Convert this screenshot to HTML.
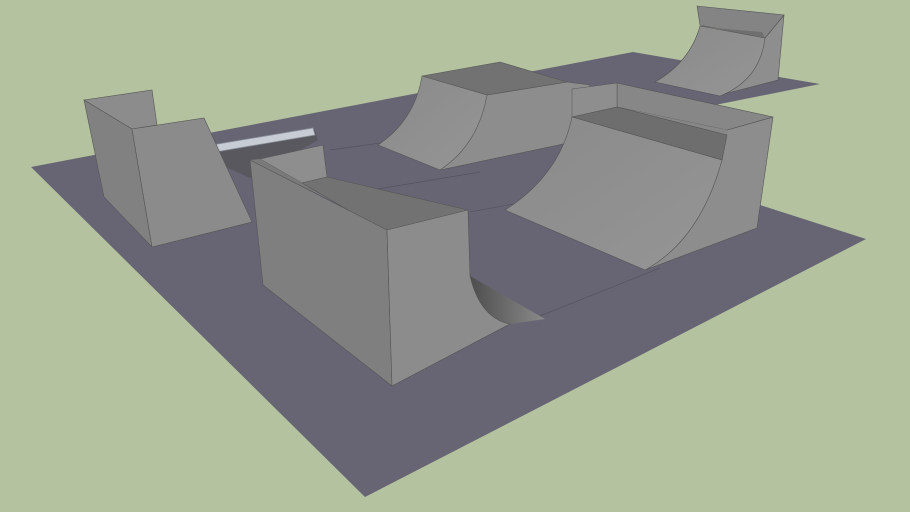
<!DOCTYPE html>
<html><head><style>html,body{margin:0;padding:0;background:#b4c29f;}svg{display:block}</style></head>
<body>
<svg width="910" height="512" viewBox="0 0 910 512" xmlns="http://www.w3.org/2000/svg">
<defs>
<linearGradient id="cv" x1="0" y1="0" x2="1" y2="1"><stop offset="0" stop-color="#8a8a8a"/><stop offset="1" stop-color="#959595"/></linearGradient>
<linearGradient id="pit" x1="0" y1="0" x2="1" y2="0"><stop offset="0" stop-color="#4e4e4e"/><stop offset="1" stop-color="#8a8a8a"/></linearGradient>
</defs>
<rect width="910" height="512" fill="#b4c29f"/>
<polygon points="31,167 633,52 820,84 700,108 760,205 866,239 365,497" fill="#676574"/>
<g stroke="#55535f" stroke-width="0.7" fill="none">
<line x1="330" y1="150" x2="440" y2="135"/>
<line x1="360" y1="192" x2="480" y2="172"/>
<line x1="470" y1="212" x2="600" y2="188"/>
<line x1="530" y1="320" x2="660" y2="268"/>
</g>
<!-- far ramp -->
<polygon points="765,38 784,15 778,80 720,95" fill="#8e8e8e" stroke="#555" stroke-width="0.6"/>
<polygon points="697,6 784,15 765,38 700,25" fill="#848484" stroke="#555" stroke-width="0.6"/>
<polygon points="700,25 765,38 762,32 703,27" fill="#6f6f6f"/>
<path d="M700,26 L765,38 Q760,80 720,96 L655,82 Q690,62 700,26 Z" fill="url(#cv)" stroke="#555" stroke-width="0.6"/>
<!-- left box -->
<polygon points="84,100 152,90 157,125 132,129" fill="#8c8c8c" stroke="#555" stroke-width="0.6"/>
<polygon points="84,100 132,129 152,247 104,197" fill="#818181" stroke="#555" stroke-width="0.6"/>
<polygon points="205,150 315,130 318,140 250,178 210,160" fill="#59585f"/>
<polygon points="212,145 313,128 315,135 215,152" fill="#c8ccd4" stroke="#8a8e98" stroke-width="0.8"/>
<polygon points="132,129 204,118 252,222 152,247" fill="#8b8b8b" stroke="#555" stroke-width="0.6"/>
<!-- middle ramp -->
<polygon points="487,95 567,82 590,85 582,140 440,170" fill="#8d8d8d" stroke="#555" stroke-width="0.6"/>
<polygon points="422,76 500,62 567,82 487,95" fill="#727272" stroke="#555" stroke-width="0.6"/>
<path d="M422,76 L487,95 Q478,145 440,170 L378,145 Q415,120 422,76 Z" fill="url(#cv)" stroke="#555" stroke-width="0.6"/>
<!-- big right ramp -->
<polygon points="722,160 727,130 773,117 757,228 645,270" fill="#8d8d8d" stroke="#555" stroke-width="0.6"/>
<polygon points="617,83 773,117 727,130 617,107" fill="#878787" stroke="#555" stroke-width="0.6"/>
<polygon points="617,107 727,130 727,135" fill="#878787"/>
<polygon points="572,89 617,83 617,107 572,117" fill="#8e8e8e" stroke="#555" stroke-width="0.5"/>
<polygon points="572,117 617,107 727,135 722,160" fill="#6e6e6e" stroke="#555" stroke-width="0.6"/>
<path d="M572,117 L722,160 Q700,240 645,270 L505,210 Q560,175 572,117 Z" fill="url(#cv)" stroke="#555" stroke-width="0.6"/>
<!-- big left halfpipe side -->
<polygon points="260,159 323,145 327,177 302,183" fill="#8e8e8e" stroke="#555" stroke-width="0.6"/>
<polygon points="250,160 260,159 302,183 387,233 386,228" fill="#7a7a7a"/>
<polygon points="302,183 327,177 468,210 387,233" fill="#727272" stroke="#555" stroke-width="0.6"/>
<polygon points="250,160 387,230 392,386 263,285" fill="#7f7f7f" stroke="#555" stroke-width="0.6"/>
<path d="M470,276 Q480,318 510,324 L545,319 Z" fill="url(#pit)"/>
<path d="M387,230 L468,210 L470,276 Q480,318 510,324 L392,386 Z" fill="#8c8c8c" stroke="#555" stroke-width="0.6"/>
</svg>
</body></html>
